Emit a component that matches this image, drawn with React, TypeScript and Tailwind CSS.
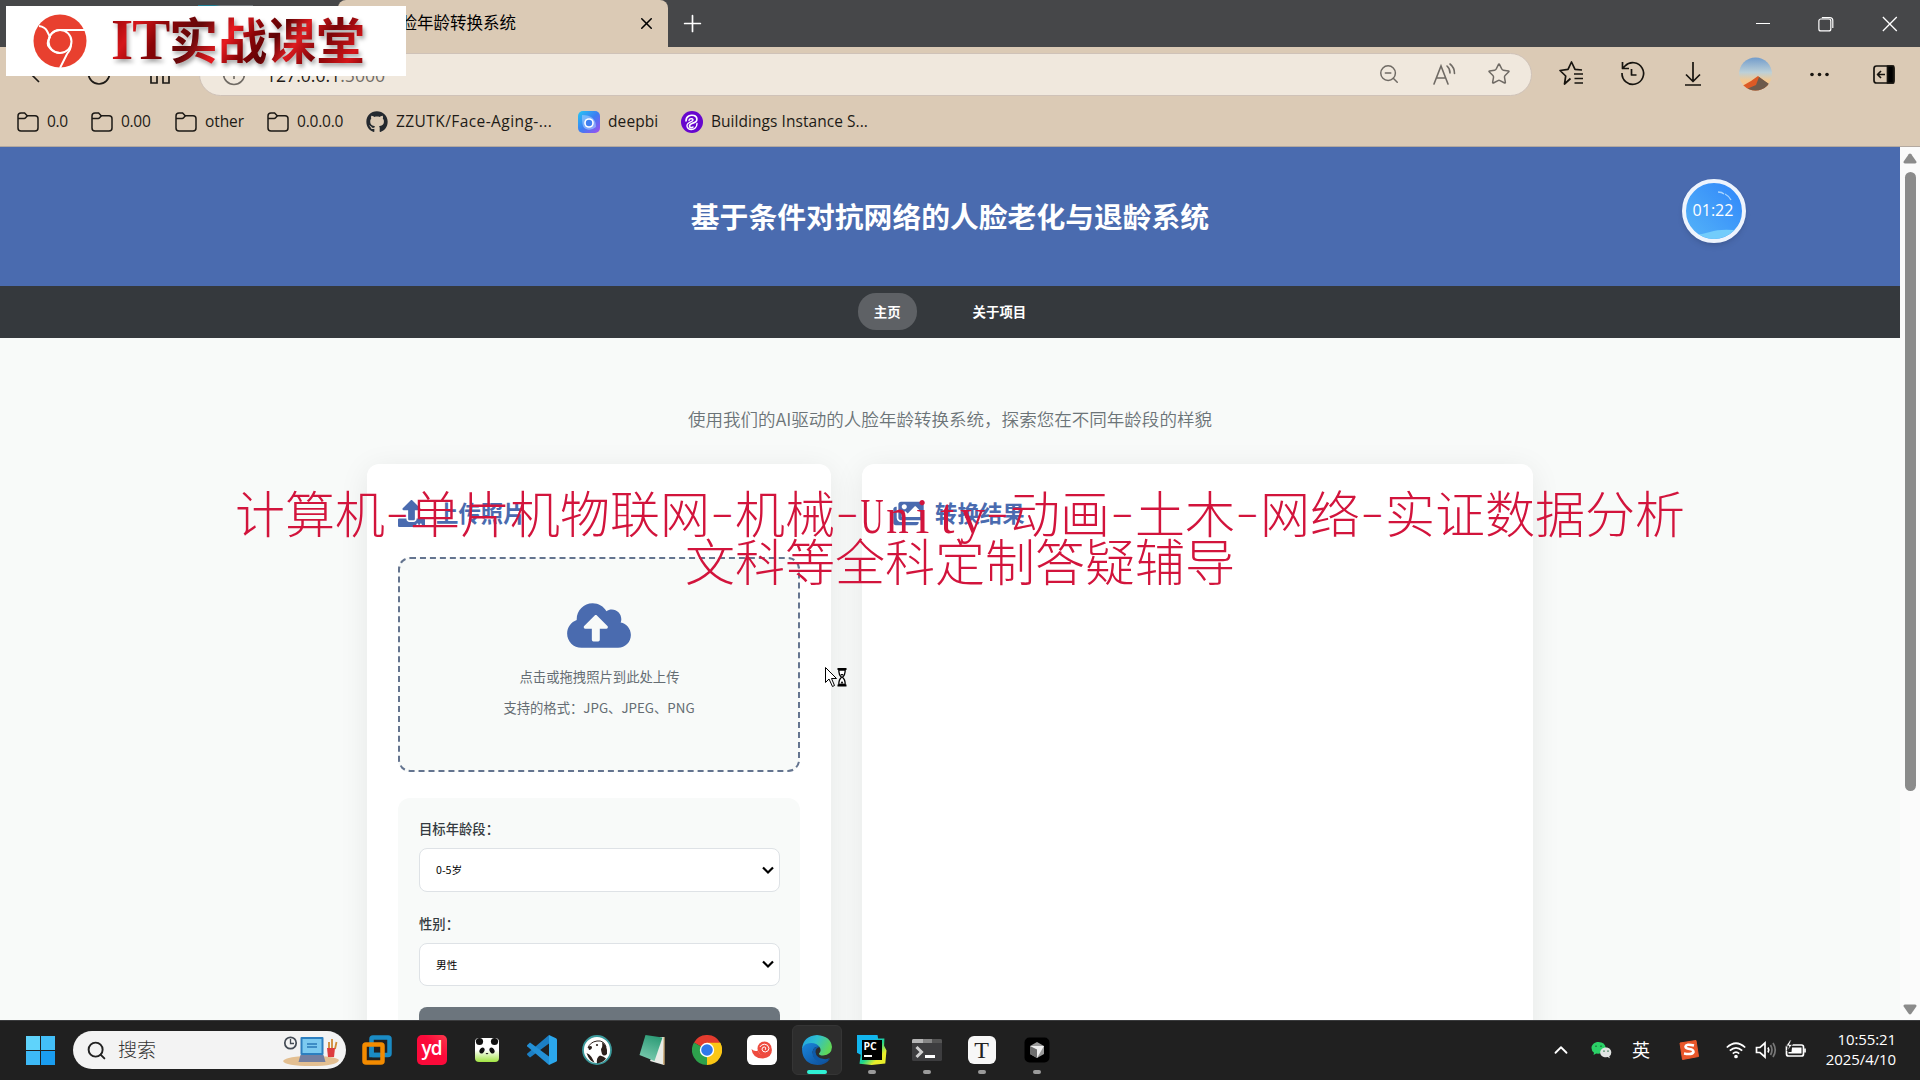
import type { JSX, ReactNode } from "react";
import {
  FaCloudUploadAlt,
  FaGithub,
  FaImages,
  FaUpload,
} from "react-icons/fa";
import { ChevronUp, Search, Star, X, Plus, ZoomOut } from "lucide-react";

const UI_FONT = "font-['Open_Sans','Noto_Sans_CJK_SC',sans-serif]";

function FolderIcon(): JSX.Element {
  return (
    <svg className="h-[22px] w-[22px]" fill="none" stroke="#1d1a16" strokeWidth="1.5" viewBox="0 0 22 22">
      <path d="M1 5a3 3 0 0 1 3-3h3.6l2.6 2.7H18a3 3 0 0 1 3 3V17a3 3 0 0 1-3 3H4a3 3 0 0 1-3-3z" />
      <path d="M1 7.5h6.2q.8 0 1.4-.7l1.8-2" />
    </svg>
  );
}

function DeepbiIcon(): JSX.Element {
  return (
    <svg className="h-[22px] w-[22px]" viewBox="0 0 22 22">
      <defs>
        <linearGradient id="deepbi" x1="0" x2="1" y1="0" y2="1">
          <stop offset="0" stopColor="#25c7f4" />
          <stop offset=".5" stopColor="#3d7df2" />
          <stop offset="1" stopColor="#a24cf0" />
        </linearGradient>
      </defs>
      <rect fill="url(#deepbi)" height="22" rx="5" width="22" />
      <path d="M4 4q7 0 10.500 3t3.500 9q-4 3.500-8.500 2.500T4.500 13Q3.500 8 4 4z" fill="#9cc8ff" opacity=".65" />
      <circle cx="11" cy="12" fill="#fff" r="4.800" />
      <circle cx="11" cy="12" fill="#3f7ff0" r="3.200" />
    </svg>
  );
}

function RoboIcon(): JSX.Element {
  return (
    <svg className="h-[22px] w-[22px]" fill="none" viewBox="0 0 22 22">
      <circle cx="11" cy="11" fill="#6706ce" r="11" />
      <path
        d="M5 10C5 5 9.500 3.500 13 4.500s4 5.500.5 7-5 1.500-5 3.500 2.500 2 3.500 1"
        stroke="#fff"
        strokeLinecap="round"
        strokeWidth="1.600"
      />
      <path
        d="M8 9.500c0-2 4-2.500 4-.5s-5.500 2-6 5 2 4.500 4.500 4.500 5.500-2 5.500-6"
        stroke="#fff"
        strokeLinecap="round"
        strokeWidth="1.400"
      />
    </svg>
  );
}

const bookmarks: { label: string; icon: ReactNode; cell: string; text: string }[] = [
  { label: "0.0", icon: <FolderIcon />, cell: "w-[74px]", text: "tracking-[-0.3px]" },
  { label: "0.00", icon: <FolderIcon />, cell: "w-[84px]", text: "tracking-[-0.3px]" },
  { label: "other", icon: <FolderIcon />, cell: "w-[92px]", text: "tracking-[-0.1px]" },
  { label: "0.0.0.0", icon: <FolderIcon />, cell: "w-[99px]", text: "tracking-[-0.2px]" },
  {
    label: "ZZUTK/Face-Aging-...",
    icon: <FaGithub className="h-[22px] w-[22px] text-[#24292f]" />,
    cell: "w-[212px]",
    text: "tracking-[0.42px]",
  },
  { label: "deepbi", icon: <DeepbiIcon />, cell: "w-[103px]", text: "tracking-[0.1px]" },
  { label: "Buildings Instance S...", icon: <RoboIcon />, cell: "w-[220px]", text: "tracking-[0.05px]" },
];

function TabStrip(): JSX.Element {
  return (
    <div className="flex h-[47px] items-stretch bg-[#464749] pl-[338px]">
      <div className="flex w-[330px] items-center justify-between rounded-t-lg bg-[#dbcab5] pr-[12px] pl-[46px]">
        <span className="text-[16.5px] whitespace-nowrap text-black">人脸年龄转换系统</span>
        <X className="h-[19px] w-[19px] text-black" strokeWidth={1.9} />
      </div>
      <div className="flex flex-1 items-center pb-px pl-[11px]">
        <Plus className="h-[27px] w-[27px] text-white" strokeWidth={1.5} />
      </div>
      <div className="flex w-[188px] items-center text-white">
        <div className="flex w-[63px] justify-center">
          <span className="h-px w-[14px] bg-white" />
        </div>
        <svg fill="none" height="16" stroke="currentColor" strokeWidth="1.2" viewBox="0 0 63 16" width="63">
          <rect height="12" rx="2" width="12" x="24" y="3" />
          <path d="M27 1.500h8a3 3 0 0 1 3 3V12" />
        </svg>
        <svg height="16" stroke="currentColor" strokeWidth="1.3" viewBox="0 0 63 16" width="63">
          <path d="m26 1 14 14M40 1 26 15" />
        </svg>
      </div>
    </div>
  );
}

function AddressRow(): JSX.Element {
  return (
    <div className="flex h-[54px] items-center">
      <svg fill="none" height="30" stroke="#1d1a16" strokeWidth="1.700" viewBox="0 0 199 30" width="199">
        <path d="m39 23-9-9 9-9M30 14h18" />
        <circle cx="99" cy="14.500" r="10.500" />
        <path d="M151 24V10l9-7 9 7v14h-6v-9h-6v9z" />
      </svg>
      <div className="flex h-[43px] w-[1333px] items-center rounded-full border border-[#cfc2b8] bg-[#f0e8dd] pl-[22px] text-[#6f6a64]">
        <svg fill="none" height="24" stroke="currentColor" strokeWidth="1.600" viewBox="0 0 24 24" width="24">
          <circle cx="12" cy="12" r="10.500" />
          <path d="M12 10v7M12 6v2" />
        </svg>
        <span className="ml-[20px] flex-1 pt-[2px] text-[17.6px]">
          <span className="text-[#1d1a16]">127.0.0.1</span>:5000
        </span>
        <div className="flex w-[165px] items-center">
          <div className="flex w-[53px] justify-center">
            <ZoomOut className="h-[22px] w-[22px]" strokeWidth={1.6} />
          </div>
          <svg fill="none" height="24" stroke="currentColor" strokeLinecap="round" strokeWidth="1.600" viewBox="0 0 55 24" width="57">
            <path d="m18 22 7-18 7 18M20.500 16h9M31 4q3 2.500 3 7M34 2q4.500 3.500 4.500 9.500" />
          </svg>
          <div className="flex w-[53px] justify-center">
            <Star className="h-[24px] w-[24px]" strokeWidth={1.5} />
          </div>
        </div>
        <div className="w-[4px]" />
      </div>
      <svg fill="none" height="34" stroke="#17140f" strokeLinejoin="round" strokeWidth="1.700" viewBox="0 0 388 34" width="388">
        <path d="m38.500 21.500-6 5.500 1.200-8-5.700-5.500 8-1.200L39.500 5l3.500 7.300 7 .7M42 17h9M42.500 21.500H51M42.500 26H51" />
        <path d="M90 16a10.800 10.800 0 1 0 3-7l-2.500 2.500M90.500 5v6.500H97M99.500 12v6h5" />
        <path d="M161 5v19M154 17.500l7 7 7-7M153 28h16" />
        <rect height="17" rx="2.500" width="20" x="342" y="9" />
        <path d="M355.500 9h6v17h-6z" fill="#000" />
        <path d="M345.500 17.500h7.500M349 14l-3.500 3.500L349 21" />
        <g fill="#17140f" stroke="none">
          <circle cx="280" cy="17.500" r="1.800" />
          <circle cx="287.500" cy="17.500" r="1.800" />
          <circle cx="295" cy="17.500" r="1.800" />
        </g>
        <defs>
          <linearGradient id="sky" x1="0" x2="0" y1="0" y2="1">
            <stop offset="0" stopColor="#6f9acb" />
            <stop offset=".45" stopColor="#bcd0d8" />
            <stop offset=".7" stopColor="#f4c890" />
          </linearGradient>
          <clipPath id="avatar">
            <circle cx="223.500" cy="17" r="16.500" />
          </clipPath>
        </defs>
        <g clipPath="url(#avatar)" stroke="none">
          <rect fill="url(#sky)" height="34" width="34" x="206" y="0" />
          <path d="m206 29 6-1 7-4 7-5 14 11v6h-34z" fill="#dc5a25" />
          <path d="m227 20 13 9v6h-31l8-4 7-3z" fill="#6e5a4b" />
        </g>
      </svg>
    </div>
  );
}

function BookmarksBar(): JSX.Element {
  return (
    <div className="flex h-[46px] items-center border-b border-[#b3a9a0] pb-[4px] pl-[17px]">
      {bookmarks.map((b) => (
        <div className={`flex shrink-0 items-center gap-[8px] ${b.cell}`} key={b.label}>
          {b.icon}
          <span className={`pt-px text-[15.5px] whitespace-nowrap text-[#1d1a16] ${b.text}`}>{b.label}</span>
        </div>
      ))}
    </div>
  );
}

function Field({ label, value }: { label: string; value: string }): JSX.Element {
  return (
    <div className="mb-[21px]">
      <p className="mb-[8px] text-[13.33px] leading-[22px] font-medium text-[#343a40]">{label}</p>
      <div className="flex h-[43.5px] items-center justify-between rounded-lg border border-[#dee2e6] bg-white pr-[5px] pl-[16px]">
        <span className="pt-px text-[10.67px] text-black">{value}</span>
        <svg fill="none" height="10" stroke="#000" strokeWidth="2.200" viewBox="0 0 12 10" width="12">
          <path d="m1 2.500 5 5 5-5" />
        </svg>
      </div>
    </div>
  );
}

function UploadCard(): JSX.Element {
  return (
    <section className="w-[464px] rounded-xl bg-white px-[31px] pt-[31px] shadow-[0_5px_30px_rgba(0,0,0,0.08)]">
      <h2 className="flex h-[36px] items-center gap-[11px] text-[22.4px] font-semibold text-[#4a6baf]">
        <FaUpload className="h-[27px] w-[27px]" />
        上传照片
      </h2>
      <div className="mt-[26px] flex h-[215px] flex-col items-center rounded-xl border-2 border-dashed border-[#64748f] bg-[#f8faf9] pt-[41px] text-[13.33px] text-[#656d73]">
        <FaCloudUploadAlt className="h-[51px] w-[64px] text-[#4a6baf]" />
        <p className="mt-[15px] ml-px leading-[21px]">点击或拖拽照片到此处上传</p>
        <p className="mt-[10px] leading-[21px]">支持的格式：JPG、JPEG、PNG</p>
      </div>
      <div className="mt-[26px] rounded-xl bg-[#f8faf9] pt-[20px] pr-[20px] pl-[21px]">
        <Field label="目标年龄段：" value="0-5岁" />
        <Field label="性别：" value="男性" />
        <div className="h-[44px] rounded-lg bg-[#6c757d]" />
      </div>
    </section>
  );
}

function ResultCard(): JSX.Element {
  return (
    <section className="h-[700px] w-[671px] rounded-xl bg-white px-[31px] pt-[31px] shadow-[0_5px_30px_rgba(0,0,0,0.08)]">
      <h2 className="flex h-[36px] items-center gap-[11px] text-[22.4px] font-semibold text-[#4a6baf]">
        <FaImages className="h-[27px] w-[31px]" />
        转换结果
      </h2>
    </section>
  );
}

function PageScrollbar(): JSX.Element {
  return (
    <div className="flex w-[20px] flex-col items-center bg-[#fbfbfb] pt-[6px] pb-[5px]">
      <svg fill="#8b8b8b" height="11" viewBox="0 0 14 11" width="14">
        <path d="M5.700 1.200q1.300-1.500 2.600 0l4.900 7q1 2-1 2.300H1.800q-2-.3-1-2.300z" />
      </svg>
      <div className="mt-[8px] h-[619px] w-[11px] rounded-full bg-[#8b8b8b]" />
      <div className="flex-1" />
      <svg fill="#8b8b8b" height="11" viewBox="0 0 14 11" width="14">
        <path d="M5.700 9.800q1.300 1.500 2.600 0l4.900-7q1-2-1-2.300H1.800q-2 .3-1 2.300z" />
      </svg>
    </div>
  );
}

function VmwareIcon(): JSX.Element {
  return (
    <svg fill="none" height="30" strokeWidth="4.500" viewBox="0 0 30 30" width="30">
      <rect height="17.500" rx="1.500" stroke="#1a8bc4" width="18" x="9.500" y="2.500" />
      <rect height="18" rx="1.500" stroke="#f38b00" width="18" x="2.500" y="9.500" />
      <path d="M9.500 12v8H18" stroke="#1a8bc4" />
    </svg>
  );
}

function YoudaoIcon(): JSX.Element {
  return (
    <div className="flex h-[30px] w-[30px] items-center justify-center rounded-[5px] bg-[linear-gradient(45deg,#fb0a3a_60%,#fb3a4c)] pb-[3px] text-[19px] font-semibold tracking-[-1px] text-white">
      yd
    </div>
  );
}

function PandaIcon(): JSX.Element {
  return (
    <svg height="30" viewBox="0 0 30 30" width="30">
      <defs>
        <linearGradient id="panda" x1="0" x2="0" y1="0" y2="1">
          <stop offset=".5" stopColor="#fff" />
          <stop offset="1" stopColor="#a0e440" />
        </linearGradient>
      </defs>
      <rect fill="url(#panda)" height="24" rx="4" width="24" x="3" y="3" />
      <circle cx="7.500" cy="6.500" fill="#111" r="3.600" />
      <circle cx="22.500" cy="6.500" fill="#111" r="3.600" />
      <ellipse cx="10" cy="15.500" fill="#111" rx="2.300" ry="3.200" transform="rotate(30 10 15.500)" />
      <ellipse cx="20" cy="15.500" fill="#111" rx="2.300" ry="3.200" transform="rotate(-30 20 15.500)" />
      <path d="M13.500 18h3L15 19.500z" fill="#111" />
    </svg>
  );
}

function CodeIcon(): JSX.Element {
  return (
    <svg height="30" viewBox="0 0 30 30" width="30">
      <path d="M22 0v8.500L3 22.500.3 20q-.6-.7 0-1.400z" fill="#1c7fc4" />
      <path d="M22 30v-8.500L3 7.500.3 10q-.6.700 0 1.400z" fill="#2390d6" />
      <path d="m22 0 7 3.300q1 .5 1 1.500v20.400q0 1-1 1.500L22 30z" fill="#2ba7ec" />
    </svg>
  );
}

function BeaverIcon(): JSX.Element {
  return (
    <svg height="30" viewBox="0 0 30 30" width="30">
      <circle cx="15" cy="15" fill="#fff" r="14" stroke="#3b9a9c" strokeWidth="1.800" />
      <path d="M6 13q2-6 9-7 7-1 9 6" fill="none" stroke="#2c201c" strokeWidth="1" />
      <path d="M20 7q6 4 5 12-3 3-5 0-1-3-1-5 2-2 1-7z" fill="#2c201c" />
      <path d="M6 12q3-2 4 0 0 2.500-3 3z" fill="#2c201c" />
      <path d="M4.500 18q3 1 5 4l3 5.500q-5-1-8-9.500zM15 28.500q-1-6 3-8 4 1 6 3-2.500 4-9 5z" fill="#2c201c" />
      <circle cx="15" cy="10" fill="#2c201c" r="1.100" />
    </svg>
  );
}

function NotebookIcon(): JSX.Element {
  return (
    <svg height="30" viewBox="0 0 30 30" width="30">
      <defs>
        <linearGradient id="cover" x1=".6" x2=".3" y1="0" y2="1">
          <stop offset="0" stopColor="#2c9b76" />
          <stop offset="1" stopColor="#7ccbb0" />
        </linearGradient>
      </defs>
      <path d="M23 2h4v28l-14-4z" fill="#e9ebe6" />
      <path d="M26.500 2h1.200v28l-1.700-.8z" fill="#c9a876" />
      <path d="m8.500 0 17 2.500-8 23.500L2.500 20z" fill="url(#cover)" />
    </svg>
  );
}

function ChromeIcon(): JSX.Element {
  return (
    <svg height="30" viewBox="0 0 30 30" width="30">
      <path d="M15 15 2 7.500A15 15 0 0 1 28 7.500z" fill="#e33b2e" />
      <path d="M15 15 28 7.500A15 15 0 0 1 15 30z" fill="#fbc716" />
      <path d="M15 15v15A15 15 0 0 1 2 7.500z" fill="#2da14c" />
      <path d="M15 7.800h13.200a15 15 0 0 1 .8 12L15 30l6.200-11.500z" fill="#fbc716" />
      <circle cx="15" cy="15" fill="#fff" r="7.200" />
      <circle cx="15" cy="15" fill="#2f78ea" r="5.800" />
    </svg>
  );
}

function SwirlIcon(): JSX.Element {
  return (
    <svg height="30" viewBox="0 0 30 30" width="30">
      <rect fill="#fff" height="30" rx="6" width="30" />
      <path d="M4.500 14q3 3 6.500 1.500 1 4 5.500 4.500 6-.5 8.500-7 .5 9.500-9 10.500Q5.500 23.500 4.500 14z" fill="#ee4b3f" />
      <circle cx="17.500" cy="13.500" fill="#ee4b3f" r="7" />
      <path
        d="M18.500 14.500q1-1.800-.8-2.600-2.700 0-2.700 2.300.3 2.800 3.300 2.800 3.700-.5 3.700-3.800-.7-4-4.700-4-3 .2-4.300 2.500"
        fill="none"
        stroke="#fff"
        strokeLinecap="round"
        strokeWidth="1"
      />
    </svg>
  );
}

function EdgeIcon(): JSX.Element {
  return (
    <svg height="30" viewBox="0 0 30 30" width="30">
      <defs>
        <linearGradient id="edgeTop" x1="0" x2="1" y1="0" y2=".4">
          <stop offset="0" stopColor="#1f9fe6" />
          <stop offset=".5" stopColor="#2fc0cf" />
          <stop offset="1" stopColor="#5fd65a" />
        </linearGradient>
        <linearGradient id="edgeLow" x1="0" x2="1" y1="0" y2="1">
          <stop offset="0" stopColor="#1a86dc" />
          <stop offset="1" stopColor="#0d4a94" />
        </linearGradient>
      </defs>
      <path d="M0 14Q1 1 15 0q14 1 15 12-.5 8-9 8.500-4 0-4-2 3-3 .5-6.500Q10 5 0 14z" fill="url(#edgeTop)" />
      <path d="M0 14q2-6 9-6 6 0 8.500 4-6-1-7 5 .5 9 10.500 9 4-.3 7-2-4.500 6-12.500 6Q.5 29 0 14z" fill="url(#edgeLow)" />
      <path d="M10.500 17q-.5 9 9.500 10 5-.5 8-4-3 1.500-6 1-8-1-8.500-7 0-4 4-5-6-1-7 5z" fill="#0f5aa8" />
    </svg>
  );
}

function PycharmIcon(): JSX.Element {
  return (
    <div className="flex h-[30px] w-[30px] items-center justify-center bg-[linear-gradient(135deg,#12b5ee_35%,#20d789_55%,#e9ee2a_75%)] [clip-path:polygon(0_0,70%_0,72%_12%,93%_12%,92%_36%,100%_52%,96%_95%,50%_100%,10%_96%,14%_66%,0_58%)]">
      <div className="h-[20px] w-[20px] bg-black pl-[2px] text-[10.5px] leading-[13px] font-bold text-white">
        PC
        <div className="mt-[2px] h-[1.5px] w-[8px] bg-white" />
      </div>
    </div>
  );
}

function TerminalIcon(): JSX.Element {
  return (
    <svg height="30" viewBox="0 0 30 30" width="30">
      <rect fill="#3d3d3f" height="22" rx="1.500" width="30" y="4" />
      <path d="M0 8V5.500Q0 4 1.500 4h27Q30 4 30 5.500V8z" fill="#555" />
      <path d="M0 8V5.500Q0 4 1.500 4H11v4z" fill="#b5b5b5" />
      <path d="M11 4h9v4h-9z" fill="#868686" />
      <path d="m4.500 12 5 5-5 5" fill="none" stroke="#cfcfcf" strokeWidth="3" />
      <path d="M13 20h10v3H13z" fill="#fff" />
    </svg>
  );
}

function TyporaIcon(): JSX.Element {
  return (
    <div className="flex h-[28px] w-[28px] items-center justify-center rounded-md bg-[#f7f7f7] font-['Liberation_Serif',serif] text-[24px] leading-none text-[#222]">
      T
    </div>
  );
}

function CursorAppIcon(): JSX.Element {
  return (
    <svg height="30" viewBox="0 0 30 30" width="30">
      <rect fill="#000" height="25" rx="5" width="25" x="2.500" y="2.500" />
      <path d="m15 7 7 4v8l-7 4-7-4v-8z" fill="#9a9a9a" />
      <path d="m8 11 14 0-7 12z" fill="#ededed" />
      <path d="m8 11 7 3.500V23l-7-4z" fill="#6e6e6e" />
    </svg>
  );
}

const taskbarApps: { id: string; icon: ReactNode; state?: "active" | "open" }[] = [
  { id: "vmware", icon: <VmwareIcon /> },
  { id: "youdao", icon: <YoudaoIcon /> },
  { id: "panda", icon: <PandaIcon /> },
  { id: "code", icon: <CodeIcon /> },
  { id: "dbeaver", icon: <BeaverIcon /> },
  { id: "notebook", icon: <NotebookIcon /> },
  { id: "chrome", icon: <ChromeIcon /> },
  { id: "swirl", icon: <SwirlIcon /> },
  { id: "edge", icon: <EdgeIcon />, state: "active" },
  { id: "pycharm", icon: <PycharmIcon />, state: "open" },
  { id: "terminal", icon: <TerminalIcon />, state: "open" },
  { id: "typora", icon: <TyporaIcon />, state: "open" },
  { id: "cursor", icon: <CursorAppIcon />, state: "open" },
];

function SearchBox(): JSX.Element {
  return (
    <div className="ml-[18px] flex h-[38px] w-[273px] items-center rounded-full bg-[#f3f3f3] pl-[13px]">
      <Search className="h-[21px] w-[21px] text-[#222]" strokeWidth={2.2} />
      <span className="ml-[11px] flex-1 text-[19px] font-light text-[#333]">搜索</span>
      <svg className="mr-[6px]" height="32" viewBox="0 0 58 32" width="58">
        <path d="M1 27q4-5 28-5t28 4q-2 6-28 6T1 27z" fill="#e3bf91" />
        <circle cx="8.500" cy="9" fill="#f3f3f3" r="5.700" stroke="#444b55" strokeWidth="1.700" />
        <path d="M8.500 5v4.500H12" fill="none" stroke="#444b55" strokeWidth="1.300" />
        <rect fill="#2c7fc0" height="18" rx="1" width="23" x="18.500" y="3" />
        <rect fill="#7ccaf0" height="14" width="19" x="20.500" y="5" />
        <path d="M25 10h10M25 13h10" stroke="#2979b8" strokeWidth="1.500" />
        <path d="M18.500 21h23l2 7h-27z" fill="#747fa0" />
        <path d="M47 15V8M50 15V5M53 15l1.500-7" stroke="#d08a35" strokeWidth="1.800" />
        <path d="M45 14h8l-1 9h-6z" fill="#dd3c3f" />
      </svg>
    </div>
  );
}

function Tray(): JSX.Element {
  return (
    <div className="flex h-full items-center pr-[24px] pb-px text-white">
      <ChevronUp className="h-[22px] w-[22px]" strokeWidth={2} />
      <svg className="ml-[19px]" height="20" viewBox="0 0 21 20" width="21">
        <path d="M7.500 2C3.500 2 .5 4.700.5 8q0 3 2.500 4.800L2.500 15l2.700-1.400q8 1 9.600-5.600Q14 2 7.500 2z" fill="#2bd167" />
        <path d="M15 7.500c-3.300 0-5.800 2.200-5.800 4.900s2.500 4.900 5.800 4.900l1.700-.2 2.100 1.100-.5-1.900q2-1.500 2-3.900c0-2.700-2-4.900-5.300-4.900z" fill="#e2e4e3" />
        <path d="M5 5.500v1.500M10 5.500v1.500M13 10.500v1.200M17 10.500v1.200" stroke="#1b6b3a" strokeWidth="1.300" />
      </svg>
      <span className="ml-[20px] text-[18px] leading-none">英</span>
      <svg className="ml-[29px]" height="20" viewBox="0 0 20 20" width="20">
        <path d="M1 3 17 .5l2.500 16L3.500 19.500z" fill="#e9572a" stroke="#e9572a" strokeLinejoin="round" />
        <path d="M15 5.500q-8-2-8.500 1 0 2 4 2.500t4 3q-1 3-9.500 1.500" fill="none" stroke="#fff" strokeWidth="2.600" />
      </svg>
      <svg className="ml-[27px]" fill="none" height="20" stroke="currentColor" strokeWidth="1.700" viewBox="0 0 80 20" width="80">
        <path d="M.8 7.500q9.200-8.500 18.400 0M3.800 10.700q6.200-5.800 12.400 0M6.800 13.700q3.200-3 6.400 0" />
        <circle cx="10" cy="16.500" fill="currentColor" r="1" />
        <path d="M30.500 7.500H34L39 3v14l-5-4.500h-3.500z" />
        <path d="M42 7.500q1.500 2.500 0 5" />
        <path d="M44.500 5q3 5 0 10M47 3q4.500 7 0 14" stroke="#777" />
        <rect height="11" rx="2" width="17" x="60.500" y="5" />
        <path d="M66 7.500h9.500v6h-13v-1.500h3z" fill="currentColor" stroke="none" />
        <path d="M79 8.500v4" />
        <path d="m64 0-4 6h3l-2 5 5.500-6.500h-3L65.500 0z" fill="currentColor" stroke="#202020" strokeWidth=".8" />
      </svg>
      <div className="ml-[19px] w-[71px] pb-[2px] text-right text-[15px] leading-[20px] tracking-[-0.1px] whitespace-nowrap">
        <p>10:55:21</p>
        <p>2025/4/10</p>
      </div>
    </div>
  );
}

function Taskbar(): JSX.Element {
  return (
    <footer className="flex h-[60px] items-center border-t border-[#3a3b3d] bg-[#202020] pb-px pl-[26px]">
      <div className="grid h-[29px] w-[29px] grid-cols-2 gap-px">
        <div className="bg-[#5fd3fb]" />
        <div className="bg-[#43bff8]" />
        <div className="bg-[#3db9f6]" />
        <div className="bg-[#1a9df0]" />
      </div>
      <SearchBox />
      <div className="ml-[3px] flex h-full items-center">
        {taskbarApps.map((app) => (
          <div className="flex w-[55px] justify-center" key={app.id}>
            <div
              className={`relative flex h-[50px] w-[50px] items-center justify-center ${
                app.state === "active" ? "rounded-md border border-[#353535] bg-[#2d2d2d]" : ""
              }`}
            >
              {app.icon}
              {app.state === "active" ? (
                <span className="absolute bottom-0 h-[4px] w-[20px] rounded-full bg-[#2ff0d4]" />
              ) : null}
              {app.state === "open" ? (
                <span className="absolute bottom-[1px] h-[4px] w-[8px] rounded-full bg-[#9a9a9a]" />
              ) : null}
            </div>
          </div>
        ))}
      </div>
      <div className="flex-1" />
      <Tray />
    </footer>
  );
}

/** Channel badge in the top left corner. */
function ChannelBadge(): JSX.Element {
  return (
    <div className="absolute top-[6px] left-[6px] flex h-[70px] w-[400px] items-center bg-white pl-[27px]">
      <div className="absolute -top-px left-[192px] h-px w-[55px] bg-[linear-gradient(90deg,#1d7f96_30%,#6d7276_40%)]" />
      <svg fill="none" height="54" stroke="#fff" strokeWidth="2" viewBox="0 0 54 54" width="54">
        <circle cx="27" cy="27" fill="#e8402f" r="26.500" stroke="none" />
        <circle cx="27" cy="27.500" r="11.500" />
        <path d="M53 16H27q-6 0-9.500 5M6 12q6 1 8 5l3 6q-4 6-1 10 4 6 11 6M38 31q0 4-4 9l-7 14" />
      </svg>
      <div className="mb-[2px] ml-[24px] flex items-center bg-[linear-gradient(125deg,#8d0509_0%,#d5161a_12%,#8a0407_22%,#64080a_34%,#e81b20_46%,#8a0407_54%,#5e0305_62%,#dd1b20_70%,#7a0407_80%,#d5161a_92%,#7a0407_100%)] bg-clip-text leading-[60px] whitespace-nowrap text-transparent drop-shadow-[2px_3px_2px_rgba(0,0,0,0.35)]">
        <span className="w-[58px] font-['Liberation_Serif',serif] text-[57px] font-bold tracking-[-1px]">IT</span>
        <span className="text-[49px] font-bold">实战课堂</span>
      </div>
    </div>
  );
}

function HalfWidth({ text }: { text: string }): JSX.Element {
  return (
    <>
      {text.split("").map((ch, i) => (
        <span className="inline-flex w-[25px] justify-center font-['Liberation_Serif',serif] font-normal" key={i}>
          {ch === "-" ? (
            <span className="-translate-y-[2px] scale-x-[1.4] scale-y-[0.6] font-['Liberation_Sans',sans-serif]">-</span>
          ) : (
            <span className={ch === "U" ? "scale-x-[0.64]" : ch === "n" ? "scale-x-90" : ""}>{ch}</span>
          )}
        </span>
      ))}
    </>
  );
}

function Watermark(): JSX.Element {
  return (
    <div className="absolute top-[490px] left-0 w-full text-center text-[50px] leading-[49px] font-light whitespace-nowrap text-[#d2143c]">
      <p className="h-[48px]">
        计算机
        <HalfWidth text="-" />
        单片机物联网
        <HalfWidth text="-" />
        机械
        <HalfWidth text="-Unity-" />
        动画
        <HalfWidth text="-" />
        土木
        <HalfWidth text="-" />
        网络
        <HalfWidth text="-" />
        实证数据分析
      </p>
      <p>文科等全科定制答疑辅导</p>
    </div>
  );
}

function RecordTimer(): JSX.Element {
  return (
    <div className="absolute top-[179px] left-[1682px] flex h-[64px] w-[64px] items-center justify-center overflow-hidden rounded-full border-4 border-[#eef4fd] bg-[linear-gradient(45deg,#55b4f8,#2f86fa)] text-[16px] text-white shadow-md">
      <svg className="absolute inset-0" height="56" viewBox="0 0 56 56" width="56">
        <path d="M0 52q12 1 24-3t32-1v12H0z" fill="#72ccfb" />
        <path d="M32 9q4 0 6 2M39 11q4 2 6 6" fill="none" stroke="#a8d4ff" strokeWidth="1.300" />
      </svg>
      <span className="relative -top-px -left-px">01:22</span>
    </div>
  );
}

function Pointer(): JSX.Element {
  return (
    <svg className="absolute top-[666px] left-[824px]" fill="#fff" height="24" stroke="#000" viewBox="0 0 24 24" width="24">
      <path d="M1.500 1.500v15l3.500-3.500 3.500 7.500 2-1-3-7h5z" />
      <path d="M13.500 3h9M13.500 19.500h9" strokeWidth="1.800" />
      <path d="M14.800 4q0 5 2.700 7.300-2.700 2.200-2.700 7.200h6.400q0-5-2.700-7.200Q21.200 9 21.200 4z" strokeWidth="1.300" />
      <path d="M16.500 8h3L18 10zM18 15l1.500 2.500h-3z" fill="#000" stroke="none" />
    </svg>
  );
}

export default function App(): JSX.Element {
  return (
    <div className={`relative flex h-[1080px] w-[1920px] flex-col overflow-hidden ${UI_FONT}`}>
      <header className="bg-[#dbcab5]">
        <TabStrip />
        <AddressRow />
        <BookmarksBar />
      </header>
      <div className="flex h-[873px] overflow-hidden">
        <main className="flex w-[1900px] flex-col bg-[#f8faf9] font-['Noto_Sans_CJK_SC',sans-serif]">
          <div className="flex h-[139px] shrink-0 items-center justify-center bg-[#4a6baf] pb-[2px]">
            <h1 className="text-[28.8px] font-bold text-white">基于条件对抗网络的人脸老化与退龄系统</h1>
          </div>
          <nav className="flex h-[52px] shrink-0 items-center justify-center gap-[40px] bg-[#35393d] pb-[2px] text-[13.4px] font-bold text-white">
            <a className="flex h-[37px] items-center rounded-[18px] bg-[#5e6165] px-[16px] pt-px">主页</a>
            <a className="flex h-[37px] items-center px-[16px] pt-px">关于项目</a>
          </nav>
          <p className="mt-[67px] text-center text-[17.55px] leading-[28px] font-[350] text-[#6c7478]">
            使用我们的AI驱动的人脸年龄转换系统，探索您在不同年龄段的样貌
          </p>
          <div className="mt-[31px] flex justify-center gap-[31px]">
            <UploadCard />
            <ResultCard />
          </div>
        </main>
        <PageScrollbar />
      </div>
      <Taskbar />
      <ChannelBadge />
      <RecordTimer />
      <Watermark />
      <Pointer />
    </div>
  );
}
